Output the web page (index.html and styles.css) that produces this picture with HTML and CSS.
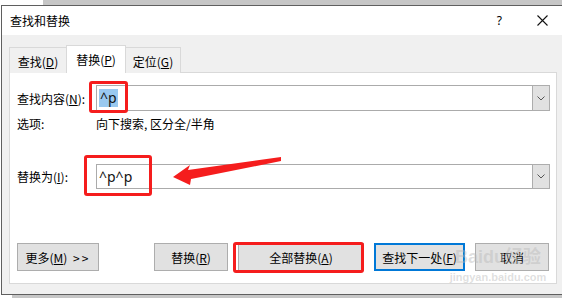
FILE: index.html
```html
<!DOCTYPE html>
<html lang="zh-CN">
<head>
  <meta charset="UTF-8" />
  <title>查找和替换</title>
  <link rel="stylesheet" href="styles.css">
</head>
<body>
  <div class="shot">
    <div class="strip top-strip"><span class="strip-white w-top"></span><span class="strip-gray"></span></div>

    <div class="dialog">
      <div class="titlebar">
        <span class="title">查找和替换</span>
        <span class="help">?</span>
        <svg class="close" width="11" height="11" viewBox="0 0 11 11">
          <path d="M0.5 0.5 L10.5 10.5 M10.5 0.5 L0.5 10.5" stroke="#111" stroke-width="1.1" fill="none"/>
        </svg>
      </div>

      <div class="body">
        <div class="tabs">
          <div class="tab">查找(<u>D</u>)</div>
          <div class="tab active">替换(<u>P</u>)</div>
          <div class="tab">定位(<u>G</u>)</div>
        </div>

        <div class="panel">
          <div class="row">
            <span class="label">查找内容(<u>N</u>):</span>
            <div class="combo tall">
              <span class="value"><span class="sel">^p</span></span>
              <span class="drop">
                <svg width="8" height="5" viewBox="0 0 8 5"><path d="M0.5 0.5 L4 4 L7.5 0.5" stroke="#555" stroke-width="1" fill="none"/></svg>
              </span>
            </div>
          </div>

          <div class="row options">
            <span class="label">选项:</span>
            <span class="opt-text">向下搜索, 区分全/半角</span>
          </div>

          <div class="row replace">
            <span class="label">替换为(<u>I</u>):</span>
            <div class="combo">
              <span class="value">^p^p</span>
              <span class="drop">
                <svg width="8" height="5" viewBox="0 0 8 5"><path d="M0.5 0.5 L4 4 L7.5 0.5" stroke="#555" stroke-width="1" fill="none"/></svg>
              </span>
            </div>
          </div>

          <div class="buttons">
            <button class="btn more">更多(<u>M</u>) <span class="chev">&gt;&gt;</span></button>
            <span class="spacer"></span>
            <button class="btn replace-one">替换(<u>R</u>)</button>
            <button class="btn replace-all">全部替换(<u>A</u>)</button>
            <button class="btn find-next">查找下一处(<u>F</u>)</button>
            <button class="btn cancel">取消</button>
          </div>
        </div>
      </div>
    </div>

    <div class="strip bottom-strip"><span class="strip-white w-bottom"></span><span class="strip-gray"></span></div>

    <!-- annotations drawn over the screenshot -->
    <div class="mark mark-find"></div>
    <div class="mark mark-replace"></div>
    <div class="mark mark-all"></div>
    <svg class="arrow" width="562" height="298" viewBox="0 0 562 298">
      <polygon points="173,177 190,165 188,170 281,157 281,161 191,179 190,185" fill="#f51d1d"/>
    </svg>

    <div class="watermark">
      <div class="wm-logo">Baidu经验</div>
      <div class="wm-url">jingyan.baidu.com</div>
    </div>
  </div>
</body>
</html>
```

FILE: styles.css
```css
* {
  box-sizing: border-box;
}

body {
  margin: 0;
  font-family: "Noto Sans CJK SC", "Noto Sans", sans-serif;
  font-size: 12px;
  color: #000;
}

.shot {
  position: relative;
  width: 562px;
  height: 298px;
  overflow: hidden;
  background: #fff;
}

.strip {
  display: flex;
}

.top-strip {
  height: 5px;
}

.bottom-strip {
  height: 3px;
}

.strip-white {
  background: #fff;
}

.w-top {
  width: 43px;
}

.w-bottom {
  width: 12px;
}

.strip-gray {
  flex: 1;
  background: #c6c6c6;
}

.dialog {
  margin-left: 1px;
  width: 561px;
  height: 290px;
  border: 1px solid #5f5f5f;
  border-right: none;
  display: flex;
  flex-direction: column;
  background: #f0f0f0;
}

.titlebar {
  height: 29px;
  background: #fff;
  display: flex;
  align-items: center;
  padding: 0 14px 0 8px;
}

.title {
  font-size: 12px;
}

.help {
  margin-left: auto;
  font-family: "Noto Sans", sans-serif;
  font-size: 12px;
  margin-right: 35px;
}

.body {
  flex: 1;
  padding: 10px 0 0 7px;
}

.tabs {
  display: flex;
  align-items: flex-end;
  height: 28px;
  margin-bottom: -1px;
  position: relative;
}

.tab {
  height: 26px;
  padding: 0;
  border: 1px solid #d9d9d9;
  border-bottom: none;
  background: #f0f0f0;
  display: flex;
  align-items: center;
  justify-content: center;
  white-space: nowrap;
  margin-right: -1px;
  padding-top: 2px;
}

.tab:nth-child(1) {
  width: 58px;
}

.tab.active {
  width: 60px;
  height: 28px;
  background: #fff;
  z-index: 1;
  padding-top: 0;
}

.tab:nth-child(3) {
  width: 56px;
}

.panel {
  width: 548px;
  height: 212px;
  background: #fff;
  border: 1px solid #d9d9d9;
  padding: 12px 6px 0 7px;
}

.row {
  display: flex;
  align-items: center;
}

.label {
  width: 79px;
  flex: none;
}

.combo {
  flex: 1;
  height: 25px;
  border: 1px solid #ababab;
  display: flex;
  align-items: stretch;
}

.combo.tall {
  height: 26px;
}

.value {
  flex: 1;
  display: flex;
  align-items: center;
  padding-left: 2px;
  font-family: "Noto Sans", sans-serif;
  font-size: 14px;
  color: #111;
}

.sel {
  background: #99c9ef;
  padding: 0 1px;
  line-height: 18px;
}

.drop {
  width: 18px;
  background: #e1e1e1;
  border: 1px solid #adadad;
  margin: -1px -1px -1px 0;
  display: flex;
  align-items: center;
  justify-content: center;
}

.options {
  margin-top: 4px;
  height: 16px;
}

.replace {
  margin-top: 33px;
}

.buttons {
  display: flex;
  margin-top: 54px;
  height: 28px;
}

.spacer {
  flex: 1;
}

.btn {
  height: 28px;
  border: 1px solid #adadad;
  background: #e1e1e1;
  font-family: "Noto Sans CJK SC", "Noto Sans", sans-serif;
  font-size: 12px;
  color: #000;
  padding: 0;
  margin-left: 10px;
  white-space: nowrap;
}

.btn.more {
  width: 82px;
  margin-left: 0;
}

.chev {
  letter-spacing: 2px;
  margin-left: 3px;
}

.btn.replace-one {
  width: 74px;
}

.btn.replace-all {
  width: 126px;
}

.btn.find-next {
  width: 91px;
  border: 2px solid #0078d7;
}

.btn.cancel {
  width: 74px;
  margin-right: 1px;
}

.mark {
  position: absolute;
  border: 3px solid #f51d1d;
  border-radius: 3px;
}

.mark-find {
  left: 89px;
  top: 81px;
  width: 39px;
  height: 32px;
}

.mark-replace {
  left: 84px;
  top: 155px;
  width: 68px;
  height: 41px;
}

.mark-all {
  left: 233px;
  top: 242px;
  width: 131px;
  height: 31px;
}

.arrow {
  position: absolute;
  left: 0;
  top: 0;
}

.watermark {
  position: absolute;
  left: 446px;
  top: 246px;
  width: 104px;
  text-align: center;
  white-space: nowrap;
  color: rgba(185, 185, 185, 0.45);
  font-family: "Liberation Sans", "Noto Sans CJK SC", sans-serif;
  font-weight: bold;
}

.wm-logo {
  font-size: 18px;
  line-height: 22px;
}

.wm-url {
  font-size: 11px;
  line-height: 13px;
  margin-top: 3px;
}
```
